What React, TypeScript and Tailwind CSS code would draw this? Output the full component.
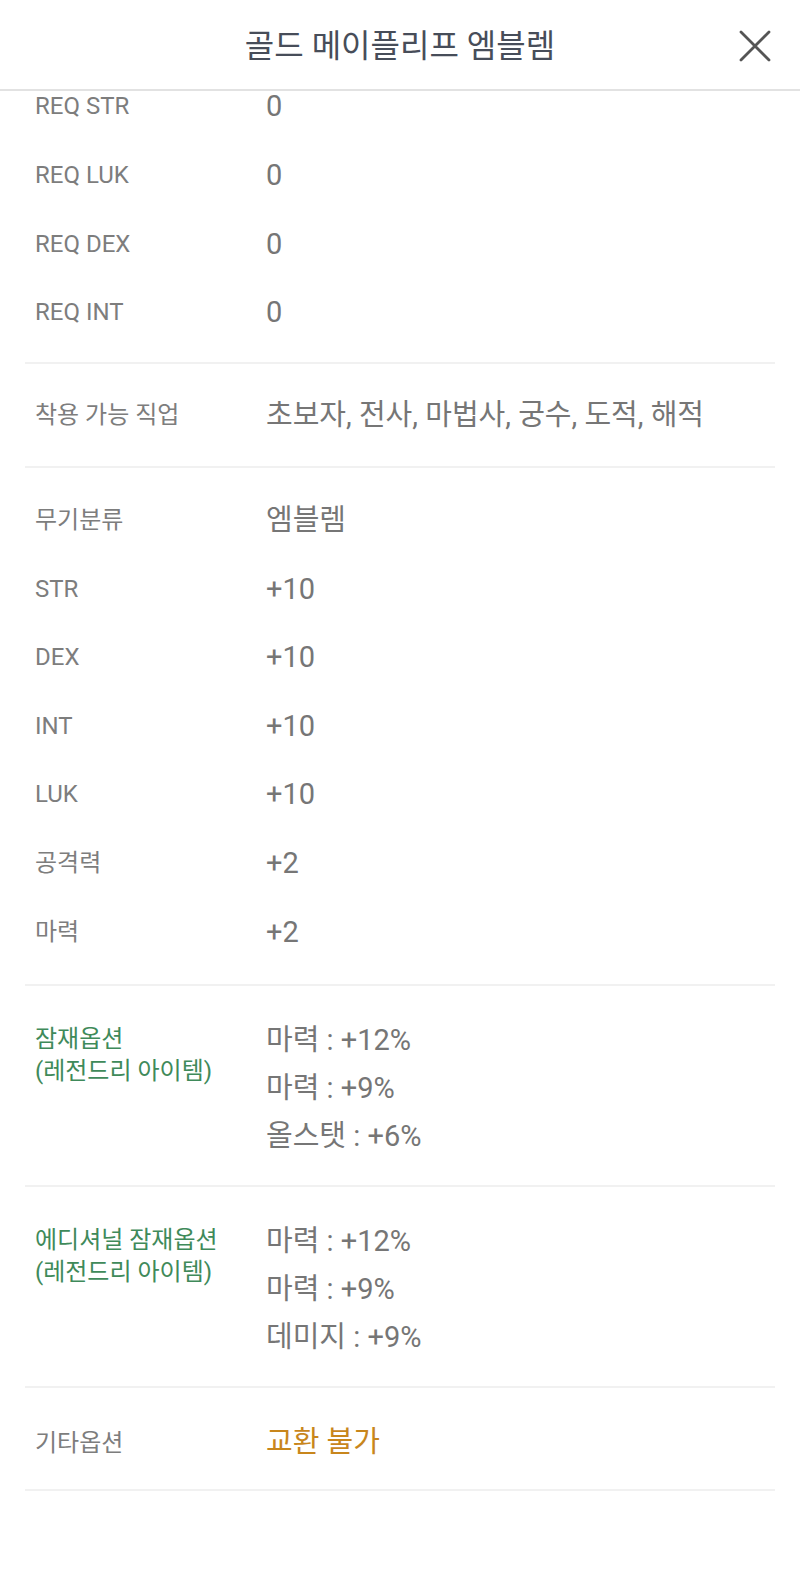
import React from "react";

const FONT = { fontFamily: 'Roboto, "Noto Sans CJK KR", sans-serif' };

function Row({
  label,
  value,
  h = "h-[68.6px]",
  first = false,
}: {
  label: string;
  value: string;
  h?: string;
  first?: boolean;
}) {
  if (first) {
    return (
      <div className="flex items-start h-[50px]">
        <div className="w-[231px] shrink-0 text-[24px] text-[#7d7d7d] leading-[30px]">{label}</div>
        <div className="text-[29px] text-[#767676] leading-[30px]">{value}</div>
      </div>
    );
  }
  return (
    <div className={`flex items-center ${h}`}>
      <div className="w-[231px] shrink-0 text-[24px] text-[#7d7d7d] leading-[32px]">{label}</div>
      <div className="text-[29px] text-[#767676] leading-[36px]">{value}</div>
    </div>
  );
}

function Divider() {
  return <div className="h-[2px] bg-[#f1f1f1]" />;
}

function MultiSection({ label, lines }: { label: string[]; lines: string[] }) {
  return (
    <div className="flex items-start pt-[30px] pb-[25px]">
      <div className="w-[231px] shrink-0 pt-[7px] text-[24px] leading-[32px] text-[#3f8a5a]">
        {label.map((l, i) => (
          <div key={i}>{l}</div>
        ))}
      </div>
      <div className="text-[29px] leading-[48px] text-[#767676]">
        {lines.map((l, i) => (
          <div key={i}>{l}</div>
        ))}
      </div>
    </div>
  );
}

export default function App() {
  return (
    <div className="w-[800px] h-[1570px] bg-white overflow-hidden" style={FONT}>
      <header className="relative h-[91px] border-b-2 border-[#e2e2e2] flex items-center justify-center">
        <div className="text-[32px] text-[#474d59] leading-none pt-[2px]">골드 메이플리프 엠블렘</div>
        <button className="absolute right-[28px] top-[29px] w-[34px] h-[34px] flex items-center justify-center">
          <svg width="34" height="34" viewBox="0 0 34 34" fill="none">
            <path d="M3 3L31 31M31 3L3 31" stroke="#555555" strokeWidth="2.8" strokeLinecap="round" />
          </svg>
        </button>
      </header>

      <div className="px-[25px]">
        <div className="px-[10px] pb-[15px]">
          <Row label="REQ STR" value="0" first />
          <Row label="REQ LUK" value="0" />
          <Row label="REQ DEX" value="0" />
          <Row label="REQ INT" value="0" />
        </div>
        <Divider />
        <div className="px-[10px]">
          <Row label="착용 가능 직업" value="초보자, 전사, 마법사, 궁수, 도적, 해적" h="h-[102px]" />
        </div>
        <Divider />
        <div className="px-[10px] pt-[18px] pb-[18px]">
          <Row label="무기분류" value="엠블렘" />
          <Row label="STR" value="+10" />
          <Row label="DEX" value="+10" />
          <Row label="INT" value="+10" />
          <Row label="LUK" value="+10" />
          <Row label="공격력" value="+2" />
          <Row label="마력" value="+2" />
        </div>
        <Divider />
        <div className="px-[10px]">
          <MultiSection label={["잠재옵션", "(레전드리 아이템)"]} lines={["마력 : +12%", "마력 : +9%", "올스탯 : +6%"]} />
        </div>
        <Divider />
        <div className="px-[10px]">
          <MultiSection label={["에디셔널 잠재옵션", "(레전드리 아이템)"]} lines={["마력 : +12%", "마력 : +9%", "데미지 : +9%"]} />
        </div>
        <Divider />
        <div className="px-[10px] h-[101px] pt-[7px] flex items-center">
          <div className="w-[231px] shrink-0 text-[24px] text-[#7d7d7d] leading-[32px] pt-[2px]">기타옵션</div>
          <div className="text-[29px] text-[#c8861c] leading-[36px]">교환 불가</div>
        </div>
        <Divider />
      </div>
    </div>
  );
}
